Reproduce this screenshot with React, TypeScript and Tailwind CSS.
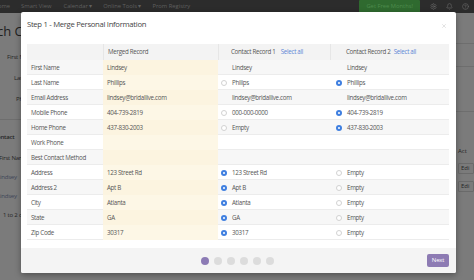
import { Settings, Bell, HelpCircle, X } from 'lucide-react';

type Row = {
  label: string;
  merged: string;
  c1: string;
  c2: string;
  pick?: 1 | 2;
};

const ROWS: Row[] = [
  { label: 'First Name', merged: 'Lindsey', c1: 'Lindsey', c2: 'Lindsey' },
  { label: 'Last Name', merged: 'Phillips', c1: 'Philips', c2: 'Phillips', pick: 2 },
  { label: 'Email Address', merged: 'lindsey@bridallive.com', c1: 'lindsey@bridallive.com', c2: 'lindsey@bridallive.com' },
  { label: 'Mobile Phone', merged: '404-739-2819', c1: '000-000-0000', c2: '404-739-2819', pick: 2 },
  { label: 'Home Phone', merged: '437-830-2003', c1: 'Empty', c2: '437-830-2003', pick: 2 },
  { label: 'Work Phone', merged: '', c1: '', c2: '' },
  { label: 'Best Contact Method', merged: '', c1: '', c2: '' },
  { label: 'Address', merged: '123 Street Rd', c1: '123 Street Rd', c2: 'Empty', pick: 1 },
  { label: 'Address 2', merged: 'Apt B', c1: 'Apt B', c2: 'Empty', pick: 1 },
  { label: 'City', merged: 'Atlanta', c1: 'Atlanta', c2: 'Empty', pick: 1 },
  { label: 'State', merged: 'GA', c1: 'GA', c2: 'Empty', pick: 1 },
  { label: 'Zip Code', merged: '30317', c1: '30317', c2: 'Empty', pick: 1 },
];

const Radio = ({ on }: { on: boolean }) =>
  on ? (
    <span className="flex h-[6px] w-[6px] items-center justify-center rounded-full bg-[#3f7fe0]">
      <span className="h-[2px] w-[2px] rounded-full bg-white" />
    </span>
  ) : (
    <span className="h-[6px] w-[6px] rounded-full border border-[#d2d2d2] bg-white" />
  );

const ContactCell = ({ value, radio, on }: { value: string; radio: boolean; on: boolean }) => (
  <div className="flex items-center pl-[3px]">
    <span className="flex w-[11px] items-center">{radio && <Radio on={on} />}</span>
    <span>{value}</span>
  </div>
);

const Background = () => (
  <div className="flex h-full flex-col bg-[#7b7b7b] text-[#262626]">
    <div className="flex h-[13px] items-center bg-[#2c2c2c] text-[5.8px] text-[#5f5f5f]">
      <span className="-ml-[2px]">ome</span>
      <span className="ml-[11px]">Smart View</span>
      <span className="ml-[12px]">Calendar ▾</span>
      <span className="ml-[11px]">Online Tools ▾</span>
      <span className="ml-[11px]">Prom Registry</span>
      <span className="ml-auto mr-[10px] self-end rounded-t-[1px] bg-[#2f6a2f] px-[7px] pt-[2px] pb-[2px] text-[#4d8a4d]">Get Free Months!</span>
      <Settings className="mr-[9px] h-[7px] w-[7px] text-[#6a6a6a]" />
      <Bell className="mr-[9px] h-[7px] w-[7px] text-[#6a6a6a]" />
      <HelpCircle className="mr-[5px] h-[7px] w-[7px] text-[#6a6a6a]" />
    </div>
    <div className="flex flex-1">
      <div className="flex w-[40px] flex-col text-[6px] tracking-[-0.2px]">
        <div className="mt-[10px] -ml-[3px] text-[13px] leading-[16px] tracking-normal whitespace-nowrap text-[#1f1f1f]">ch C</div>
        <div className="mt-[14px] ml-[7px] whitespace-nowrap">First N</div>
        <div className="mt-[12px] ml-[14px] whitespace-nowrap">Last N</div>
        <div className="mt-[12px] ml-[16px] whitespace-nowrap">Ph</div>
        <div className="mt-[15px] h-px w-full bg-[#6e6e6e]" />
        <div className="mt-[13px] -ml-[3px] font-semibold whitespace-nowrap">ontact</div>
        <div className="mt-[12px] -ml-[1px] whitespace-nowrap">First Nam</div>
        <div className="mt-[10px] -ml-[3px] whitespace-nowrap text-[#3e4658]">Lindsey</div>
        <div className="mt-[10px] -ml-[3px] whitespace-nowrap text-[#3e4658]">Lindsey</div>
        <div className="mt-[10px] ml-[3px] whitespace-nowrap">1 to 2 o</div>
      </div>
      <div className="flex-1" />
      <div className="flex w-[18px] flex-col text-[6px]">
        <div className="mt-[30px] h-px bg-[#6e6e6e]" />
        <div className="mt-[22px] h-px bg-[#6e6e6e]" />
        <div className="mt-[44px] h-px bg-[#6e6e6e]" />
        <div className="mt-[35px] ml-[2px] whitespace-nowrap">Act</div>
        <div className="mt-[7px] ml-[2px] w-[16px] rounded-[1px] border border-[#6a6a6a] pl-[2px] leading-[9px]">Edi</div>
        <div className="mt-[7px] ml-[2px] w-[16px] rounded-[1px] border border-[#6a6a6a] pl-[2px] leading-[9px]">Edi</div>
      </div>
    </div>
  </div>
);

export default function App() {
  return (
    <div
      className="relative h-[280px] w-[474px] overflow-hidden"
      style={{ fontFamily: '"Open Sans", "Liberation Sans", sans-serif' }}
    >
      <Background />
      <div className="absolute top-[12px] left-[21px] flex h-[261px] w-[435px] flex-col rounded-[2px] bg-white shadow-[0_2px_6px_rgba(0,0,0,0.35)]">
        <div className="flex h-[26px] items-center pr-[9px] pl-[6px]">
          <span className="text-[7.7px] tracking-[-0.3px] text-[#444]">Step 1 - Merge Personal Information</span>
          <X className="mt-[2px] ml-auto h-[6px] w-[6px] text-[#b5b5b5]" strokeWidth={1.5} />
        </div>
        <div className="mt-[6px] mr-[7px] ml-[6px] text-[6.2px] leading-[15px] tracking-[-0.3px] text-[#555]">
          <div className="grid h-[16px] grid-cols-[76px_115px_112px_119px] items-center bg-[#f3f3f3]">
            <div />
            <div className="h-full border-l border-[#e6e6e6] pl-[4px] leading-[16px]">Merged Record</div>
            <div className="h-full border-l border-[#e6e6e6] pl-[12px] leading-[16px]">
              Contact Record 1 <span className="ml-[4px] text-[#5b86d6]">Select all</span>
            </div>
            <div className="h-full border-l border-[#e6e6e6] pl-[15px] leading-[16px]">
              Contact Record 2 <span className="ml-[2px] text-[#5b86d6]">Select all</span>
            </div>
          </div>
          {ROWS.map((r, i) => (
            <div
              key={r.label}
              className={`grid h-[15px] grid-cols-[76px_115px_112px_119px] border-b border-[#ececec] ${
                i % 2 === 0 ? 'bg-[#f7f7f7]' : 'bg-white'
              }`}
            >
              <div className="pl-[4px]">{r.label}</div>
              <div className={`pl-[4px] ${i % 2 === 0 ? 'bg-[#fcf4e0]' : 'bg-[#fdf7e6]'}`}>{r.merged}</div>
              <ContactCell value={r.c1} radio={!!r.pick} on={r.pick === 1} />
              <div className="pl-[3px]">
                <ContactCell value={r.c2} radio={!!r.pick} on={r.pick === 2} />
              </div>
            </div>
          ))}
        </div>
        <div className="mt-auto flex h-[25px] items-center rounded-b-[2px] bg-[#f4f4f4] pr-[7px]">
          <div className="ml-[180px] flex gap-[5px]">
            <span className="h-[8px] w-[8px] rounded-full bg-[#8c7bb5]" />
            <span className="h-[8px] w-[8px] rounded-full bg-[#dcdcdc]" />
            <span className="h-[8px] w-[8px] rounded-full bg-[#dcdcdc]" />
            <span className="h-[8px] w-[8px] rounded-full bg-[#dcdcdc]" />
            <span className="h-[8px] w-[8px] rounded-full bg-[#dcdcdc]" />
            <span className="h-[8px] w-[8px] rounded-full bg-[#dcdcdc]" />
          </div>
          <button className="ml-auto h-[13px] w-[22px] rounded-[2px] bg-[#8d7bb3] text-[6px] tracking-[-0.2px] text-white">Next</button>
        </div>
      </div>
    </div>
  );
}
